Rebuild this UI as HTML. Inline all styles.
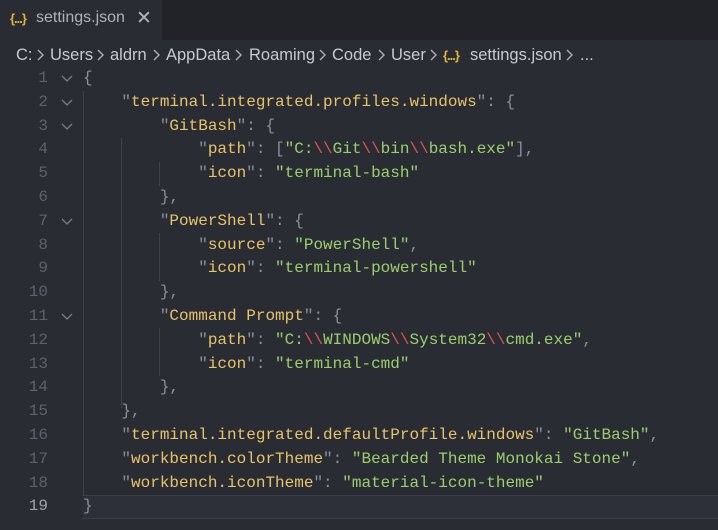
<!DOCTYPE html>
<html><head><meta charset="utf-8"><style>
body{margin:0;width:718px;height:530px;background:#2a2c34;overflow:hidden;font-family:"Liberation Sans",sans-serif;position:relative}
.tabbar{position:absolute;left:0;top:0;width:718px;height:40px;background:#222328}
.tab{position:absolute;left:0;top:0;width:162px;height:40px;background:#2a2c34;color:#aeb2bb;font-size:16px}
.ic{color:#e2b437;font-weight:bold;font-size:13px;letter-spacing:-1px}
.bc{position:absolute;left:0;top:45px;width:718px;height:20px;line-height:20px;color:#c6cad2;font-size:16.5px;white-space:pre}
.bc span{position:absolute;top:0}
.code{position:absolute;left:0;top:67px;font-family:"Liberation Mono",monospace;font-size:16px}
.ln{position:absolute;height:23.8px;line-height:23.8px;white-space:pre}
.num{position:absolute;left:0;width:48px;text-align:right;color:#5d616b;font-family:"Liberation Mono",monospace;font-size:16px}
.t{position:absolute;left:83px}
.k{color:#e8c468}.s2{color:#9dce6d}.p{color:#8b909b}.e{color:#e35252}
.guide{position:absolute;width:1px;background:#3d4049}
.cur{position:absolute;left:82px;top:495px;width:636px;height:22px;border-top:1px solid #3a3d45;border-bottom:1px solid #3a3d45;background:#2d3038}
</style></head><body>
<div class="tabbar"><div class="tab"><span class="ic" style="position:absolute;left:10px;top:11px">{...}</span><span style="position:absolute;left:36px;top:9px">settings.json</span><span style="position:absolute;left:136px;top:7px;font-size:19px;color:#b0b4bc">✕</span></div></div>
<div class="bc">
<span style="left:16px">C:</span>
<span style="left:50px">Users</span>
<span style="left:110px">aldrn</span>
<span style="left:166px">AppData</span>
<span style="left:249px">Roaming</span>
<span style="left:332px">Code</span>
<span style="left:391px">User</span>
<span class="ic" style="left:443px;top:1px">{...}</span>
<span style="left:470px">settings.json</span>
<span style="left:580px">...</span>
</div>
<svg style="position:absolute;left:0;top:45px" width="718" height="20"><g fill="none" stroke="#aab0ba" stroke-width="1.4">
<path d="M38 5l5 5-5 5"/><path d="M98 5l5 5-5 5"/><path d="M154 5l5 5-5 5"/><path d="M236 5l5 5-5 5"/><path d="M320 5l5 5-5 5"/><path d="M379 5l5 5-5 5"/><path d="M431 5l5 5-5 5"/><path d="M567 5l5 5-5 5"/>
</g></svg>
<div class="cur"></div>
<div class="guide" style="left:83px;top:91px;height:404px"></div>
<div class="guide" style="left:121px;top:138px;height:270px"></div>
<div class="guide" style="left:159px;top:162px;height:24px"></div>
<div class="guide" style="left:159px;top:233px;height:48px"></div>
<div class="guide" style="left:159px;top:328px;height:48px"></div>
<svg style="position:absolute;left:0;top:0" width="80" height="530">
<g fill="none" stroke="#7a7e88" stroke-width="1.3">
<path d="M62 76l5 5 5-5"/><path d="M62 100l5 5 5-5"/><path d="M62 124l5 5 5-5"/><path d="M62 219l5 5 5-5"/><path d="M62 314l5 5 5-5"/>
</g></svg>
<div class="code" id="c"></div>
<script>
var L=[
'<span class="p">{</span>',
'    <span class="p">"</span><span class="k">terminal.integrated.profiles.windows</span><span class="p">": {</span>',
'        <span class="p">"</span><span class="k">GitBash</span><span class="p">": {</span>',
'            <span class="p">"</span><span class="k">path</span><span class="p">": [</span><span class="s2">"C:<span class="e">\\\\</span>Git<span class="e">\\\\</span>bin<span class="e">\\\\</span>bash.exe"</span><span class="p">],</span>',
'            <span class="p">"</span><span class="k">icon</span><span class="p">": </span><span class="s2">"terminal-bash"</span>',
'        <span class="p">},</span>',
'        <span class="p">"</span><span class="k">PowerShell</span><span class="p">": {</span>',
'            <span class="p">"</span><span class="k">source</span><span class="p">": </span><span class="s2">"PowerShell"</span><span class="p">,</span>',
'            <span class="p">"</span><span class="k">icon</span><span class="p">": </span><span class="s2">"terminal-powershell"</span>',
'        <span class="p">},</span>',
'        <span class="p">"</span><span class="k">Command Prompt</span><span class="p">": {</span>',
'            <span class="p">"</span><span class="k">path</span><span class="p">": </span><span class="s2">"C:<span class="e">\\\\</span>WINDOWS<span class="e">\\\\</span>System32<span class="e">\\\\</span>cmd.exe"</span><span class="p">,</span>',
'            <span class="p">"</span><span class="k">icon</span><span class="p">": </span><span class="s2">"terminal-cmd"</span>',
'        <span class="p">},</span>',
'    <span class="p">},</span>',
'    <span class="p">"</span><span class="k">terminal.integrated.defaultProfile.windows</span><span class="p">": </span><span class="s2">"GitBash"</span><span class="p">,</span>',
'    <span class="p">"</span><span class="k">workbench.colorTheme</span><span class="p">": </span><span class="s2">"Bearded Theme Monokai Stone"</span><span class="p">,</span>',
'    <span class="p">"</span><span class="k">workbench.iconTheme</span><span class="p">": </span><span class="s2">"material-icon-theme"</span>',
'<span class="p">}</span>'];
var h='';for(var i=0;i<L.length;i++){var y=(i*23.8).toFixed(1);h+='<div class="ln" style="top:'+y+'px;left:0;width:718px"><span class="num"'+(i==18?' style="color:#a0a4ae"':'')+'>'+(i+1)+'</span><span class="t">'+L[i]+'</span></div>';}
document.getElementById('c').innerHTML=h;
</script>
</body></html>
